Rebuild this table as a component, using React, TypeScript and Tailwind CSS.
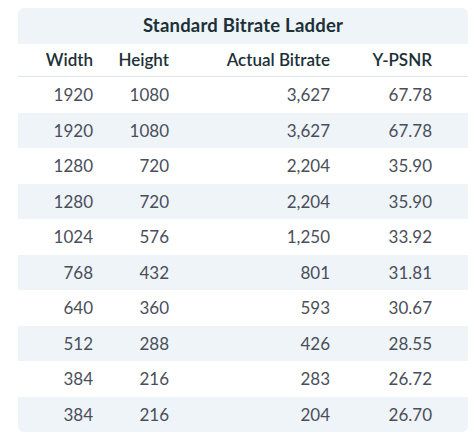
import React from 'react';

const rows: [string, string, string, string][] = [
  ['1920', '1080', '3,627', '67.78'],
  ['1920', '1080', '3,627', '67.78'],
  ['1280', '720', '2,204', '35.90'],
  ['1280', '720', '2,204', '35.90'],
  ['1024', '576', '1,250', '33.92'],
  ['768', '432', '801', '31.81'],
  ['640', '360', '593', '30.67'],
  ['512', '288', '426', '28.55'],
  ['384', '216', '283', '26.72'],
  ['384', '216', '204', '26.70'],
];

const cols = 'grid grid-cols-[75px_76px_161px_102px_1fr] items-center text-right';

const App: React.FC = () => {
  return (
    <div className="w-[474px] h-[440px] bg-white pt-2 px-[18px] font-['Lato',sans-serif] text-[17px]">
      <div className="w-[450px] rounded-md overflow-hidden">
        <div className="h-[36px] bg-[#eef4f8] flex items-center justify-center text-[18.5px] font-bold text-[#1c3037] tracking-[0.2px]">
          Standard Bitrate Ladder
        </div>
        <div className={`${cols} h-[33px] border-b border-[#dfe6ea] font-semibold text-[#1c3037] text-[17px]`}>
          <span>Width</span>
          <span>Height</span>
          <span>Actual Bitrate</span>
          <span>Y-PSNR</span>
          <span></span>
        </div>
        {rows.map((r, i) => (
          <div
            key={i}
            className={`${cols} h-[35.5px] text-[#4a4e5a] ${i % 2 === 1 ? 'bg-[#eef4f8]' : 'bg-white'}`}
          >
            <span>{r[0]}</span>
            <span>{r[1]}</span>
            <span>{r[2]}</span>
            <span>{r[3]}</span>
            <span></span>
          </div>
        ))}
      </div>
    </div>
  );
};

export default App;
